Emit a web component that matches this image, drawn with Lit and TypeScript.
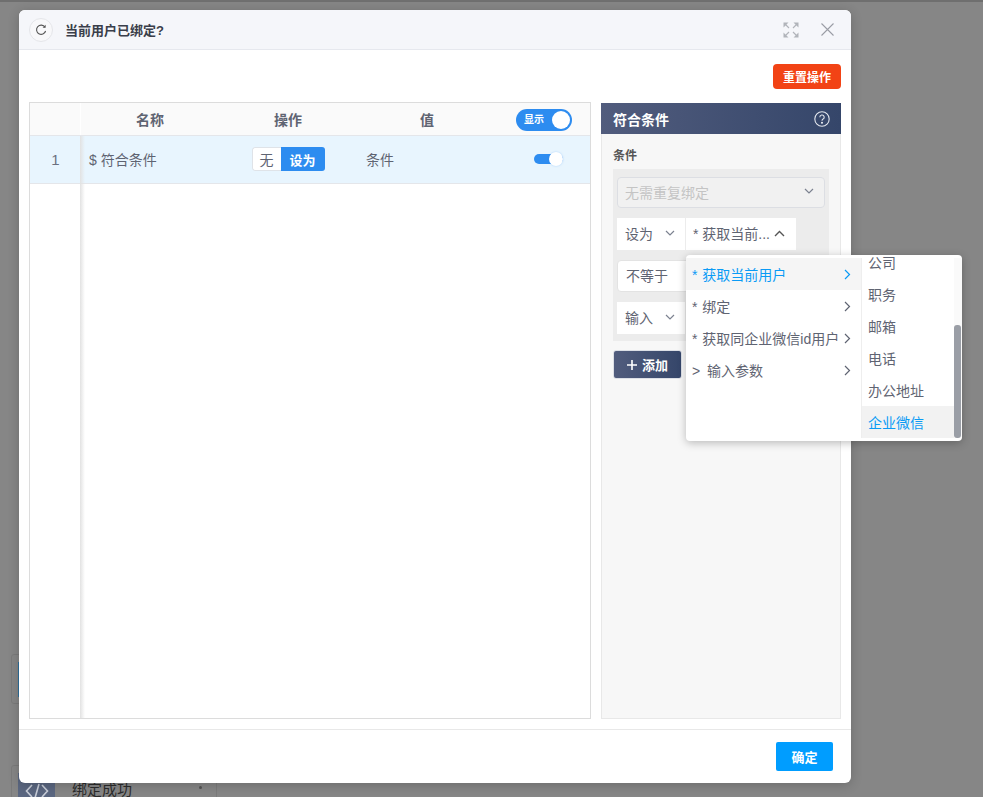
import { css, html, LitElement, svg } from 'lit';
import { customElement } from 'lit/decorators.js';

const chevronDown = svg`<path d="M1 1l4 4 4-4" fill="none" stroke="currentColor" stroke-width="1.2"/>`;
const chevronUp = svg`<path d="M1 6l4.5-4.5L10 6" fill="none" stroke="currentColor" stroke-width="1.4"/>`;
const chevronRight = svg`<path d="M1 1l4.5 4.5L1 10" fill="none" stroke="currentColor" stroke-width="1.2"/>`;

const parents = [
  { label: '* 获取当前用户', active: true },
  { label: '* 绑定' },
  { label: '* 获取同企业微信id用户' },
  { label: '> 输入参数', wide: true },
];
const fields = ['公司', '职务', '邮箱', '电话', '办公地址', '企业微信'];

@customElement('app-root')
export class AppRoot extends LitElement {
  static styles = css`
    :host {
      display: block;
      height: 797px;
      position: relative;
      overflow: hidden;
      background: #868686;
      font-family: "Liberation Sans", "Noto Sans CJK SC", sans-serif;
      font-size: 14px;
      color: #5f6472;
    }
    * { box-sizing: border-box; }

    /* page behind the mask */
    .page-line { height: 2px; background: #6f6f6f; }
    .bg-stub {
      position: absolute;
      left: 11px;
      top: 654px;
      width: 40px;
      height: 50px;
      border: 1px solid #7b7b7b;
      border-radius: 3px;
    }
    .bg-stub i { display: block; width: 3px; height: 35px; margin: 7px 0 0 6px; background: #2f6f9c; }
    .bg-card {
      position: absolute;
      left: 11px;
      top: 765px;
      width: 206px;
      height: 40px;
      border: 1px solid #7b7b7b;
      border-radius: 3px;
      display: flex;
      align-items: flex-start;
    }
    .bg-card .code {
      width: 37px;
      height: 32px;
      margin: 7px 0 0 6px;
      background: #5b6781;
      display: flex;
      justify-content: center;
      padding-top: 10px;
    }
    .bg-card .txt { margin: 13px 0 0 17px; font-size: 15px; line-height: 21px; color: #2c2c2c; flex: 1; }
    .bg-card .dot { width: 3px; height: 3px; border-radius: 50%; background: #555; margin: 20px 14px 0 0; }

    /* dialog */
    .dialog {
      position: absolute;
      left: 19px;
      top: 10px;
      width: 832px;
      height: 773px;
      background: #fff;
      border-radius: 6px;
      box-shadow: 0 2px 12px rgba(0,0,0,.2);
      display: flex;
      flex-direction: column;
      overflow: hidden;
    }
    .head {
      height: 40px;
      flex: none;
      background: #f5f6fa;
      border-bottom: 1px solid #e6e8ee;
      display: flex;
      align-items: center;
      padding: 0 17px 0 10px;
    }
    .refresh {
      width: 24px;
      height: 24px;
      border-radius: 50%;
      border: 1px solid #e5e6ea;
      background: #f8f8fa;
      display: flex;
      align-items: center;
      justify-content: center;
      margin-right: 12px;
    }
    .title { font-weight: 700; font-size: 13px; color: #3a3e4a; flex: 1; }
    .head svg.max { margin-right: 22px; }

    .body {
      flex: 1;
      min-height: 0;
      display: flex;
      flex-direction: column;
      padding: 14px 10px 10px;
    }
    .toolbar { display: flex; justify-content: flex-end; height: 25px; margin-bottom: 13px; }
    .reset {
      width: 68px;
      height: 25px;
      background: #f24315;
      color: #fff;
      font-size: 12px;
      font-weight: 700;
      border-radius: 4px;
      display: flex;
      align-items: center;
      justify-content: center;
    }
    .main { flex: 1; min-height: 0; display: flex; gap: 10px; }

    /* table */
    .table {
      width: 562px;
      border: 1px solid #dcdcdc;
      display: flex;
      flex-direction: column;
      position: relative;
    }
    .thead {
      height: 33px;
      background: #fafafa;
      border-bottom: 1px solid #e4e6ea;
      display: grid;
      grid-template-columns: 51px 138px 138px 140px 1fr;
      align-items: center;
      font-weight: 700;
      font-size: 14px;
      text-align: center;
    }
    .thead .first { height: 100%; border-right: 1px solid #fff; }
    .tr {
      height: 48px;
      background: #e8f5fe;
      border-bottom: 1px solid #e4e6ea;
      display: grid;
      grid-template-columns: 51px 138px 138px 140px 1fr;
      align-items: center;
      padding-bottom: 1px;
      font-size: 14px;
    }
    .tr .num { text-align: center; font-size: 15px; color: #6b7080; }
    .tr .name { padding-left: 8px; }
    .tr .op { display: flex; justify-content: center; }
    .tr .val { padding-left: 9px; }
    .fixed-shadow {
      position: absolute;
      left: 50px;
      top: 33px;
      bottom: 0;
      width: 5px;
      background: linear-gradient(90deg, #e2e2e2, rgba(255,255,255,0));
    }
    .seg { display: flex; height: 24px; border-radius: 3px; overflow: hidden; width: 73px; }
    .seg span { display: flex; align-items: center; justify-content: center; }
    .seg .off {
      width: 29px;
      background: #fff;
      border: 1px solid #dfe3e8;
      border-right: 0;
      border-radius: 3px 0 0 3px;
    }
    .seg .on { flex: 1; background: #2d8cf0; color: #fff; font-weight: 700; font-size: 13px; }
    .switch-big {
      width: 56px;
      height: 22px;
      border-radius: 11px;
      background: #2d8cf0;
      position: relative;
      color: #fff;
      font-size: 10px;
      font-weight: 700;
      line-height: 22px;
      padding-left: 8px;
      margin: 1px 0 0 19px;
      text-align: left;
    }
    .switch-big i {
      position: absolute;
      right: 2px;
      top: 2px;
      width: 18px;
      height: 18px;
      border-radius: 50%;
      background: #fff;
    }
    .switch-small {
      width: 29px;
      height: 10px;
      border-radius: 5px;
      background: #2d8cf0;
      position: relative;
      margin-left: 37px;
    }
    .switch-small i {
      position: absolute;
      right: 0;
      top: -2px;
      width: 14px;
      height: 14px;
      border-radius: 50%;
      background: #fff;
      box-shadow: 0 0 2px rgba(45,140,240,.35);
    }

    /* condition panel */
    .panel {
      width: 240px;
      margin-top: 1px;
      background: #f7f7f7;
      border: 1px solid #e8e8e8;
      border-top: 0;
      display: flex;
      flex-direction: column;
    }
    .panel-head {
      height: 31px;
      margin: 0 -1px;
      background: linear-gradient(90deg, #515c7d, #35466a);
      color: #fff;
      font-weight: 700;
      font-size: 14px;
      display: flex;
      align-items: center;
      justify-content: space-between;
      padding: 0 11px 0 12px;
    }
    .panel-body { padding: 14px 11px 0; }
    .label { font-size: 12px; font-weight: 700; line-height: 17px; margin-bottom: 4px; color: #555; }
    .group {
      width: 216px;
      height: 172px;
      background: #ececec;
      padding: 8px 4px;
      display: flex;
      flex-direction: column;
      gap: 10px;
    }
    .row { display: flex; gap: 1px; height: 32px; }
    .sel {
      height: 32px;
      background: #fff;
      display: flex;
      align-items: center;
      justify-content: space-between;
      padding: 0 10px 2px 8px;
      font-size: 14px;
      flex: none;
    }
    .sel svg { color: #7c8290; }
    .sel.full {
      width: 208px;
      height: 31px;
      background: #f1f1f1;
      border: 1px solid #dcdee3;
      border-radius: 4px;
      color: #c4c4c4;
      padding-left: 7px;
    }
    .sel.short { width: 68px; }
    .sel.wide { width: 110px; padding-right: 11px; padding-left: 7px; }
    .sel.wide svg { color: #555; }
    .sel.neq { width: 90px; border: 1px solid #e3e3e3; border-radius: 4px; }
    .add {
      margin-top: 9px;
      width: 69px;
      height: 29px;
      border-radius: 3px;
      background: linear-gradient(90deg, #515c7d, #35466a);
      color: #fff;
      font-weight: 700;
      font-size: 13px;
      display: flex;
      align-items: center;
      justify-content: center;
      gap: 5px;
      border: 1px solid #dcdfe6;
    }

    .footer {
      height: 54px;
      flex: none;
      border-top: 1px solid #e8e8e8;
      display: flex;
      justify-content: flex-end;
      padding: 12px 18px 0 0;
    }
    .ok {
      width: 57px;
      height: 29px;
      background: #009dff;
      color: #fff;
      border-radius: 2px;
      font-size: 13px;
      font-weight: 700;
      display: flex;
      align-items: center;
      justify-content: center;
    }

    /* cascader popup */
    .cascader {
      position: absolute;
      left: 686px;
      top: 255px;
      width: 276px;
      height: 186px;
      background: #fff;
      border-radius: 4px;
      box-shadow: 0 2px 8px rgba(0,0,0,.25);
      display: flex;
      padding: 3px 0;
      overflow: hidden;
      font-size: 14px;
    }
    .col1 { width: 176px; border-right: 1px solid #eee; flex: none; }
    .col1 .item {
      height: 32px;
      display: flex;
      align-items: center;
      justify-content: space-between;
      padding: 0 10px 0 6px;
      word-spacing: 1px;
    }
    .col1 .item.active { background: #f5f5f5; color: #0a9bf5; }
    .col1 .item.wide { word-spacing: 3px; }
    .col2 { width: 92px; margin-top: -12px; flex: none; }
    .col2 .item { height: 32px; display: flex; align-items: center; padding-left: 6px; }
    .col2 .item.active { background: #f2f2f2; color: #0a9bf5; }
    .scroll { flex: 1; position: relative; background: #fafafa; }
    .thumb {
      position: absolute;
      left: 0;
      right: 1px;
      top: 67px;
      height: 113px;
      border-radius: 3px;
      background: #9a9ea6;
    }
  `;

  render() {
    return html`
      <div class="page-line"></div>
      <div class="bg-stub"><i></i></div>
      <div class="bg-card">
        <div class="code">
          <svg width="24" height="16" viewBox="0 0 24 16" fill="none" stroke="#c9ced9" stroke-width="1.6">
            <path d="M7 2L1.5 8 7 14M17 2l5.500 6L17 14M14 1l-4 14"/>
          </svg>
        </div>
        <div class="txt">绑定成功</div>
        <span class="dot"></span>
      </div>

      <div class="dialog">
        <div class="head">
          <span class="refresh">
            <svg width="12" height="12" viewBox="0 0 12 12"><path d="M10 3.2A4.600 4.600 0 1 0 10.600 7" fill="none" stroke="#555" stroke-width="1.1"/><path d="M10.600 .8v3h-3z" fill="#555"/></svg>
          </span>
          <span class="title">当前用户已绑定?</span>
          <svg class="max" width="16" height="16" viewBox="0 0 16 16" fill="#b1b4ba" stroke="#b1b4ba" stroke-width="1.1">
            <path d="M.5 .5h5L.5 5.500zM15.500 .5h-5l5 5zM.5 15.500h5l-5-5zM15.500 15.500h-5l5-5z" stroke="none"/>
            <path d="M2 2l4 4M14 2l-4 4M2 14l4-4M14 14l-4-4" fill="none"/>
          </svg>
          <svg width="13" height="13" viewBox="0 0 13 13" fill="none" stroke="#9a9da5" stroke-width="1.1"><path d="M.5 .5l12 12M12.500 .5l-12 12"/></svg>
        </div>

        <div class="body">
          <div class="toolbar"><span class="reset">重置操作</span></div>
          <div class="main">
            <div class="table">
              <div class="thead">
                <span class="first"></span>
                <span>名称</span>
                <span>操作</span>
                <span>值</span>
                <span class="switch-big">显示<i></i></span>
              </div>
              <div class="tr">
                <span class="num">1</span>
                <span class="name">$ 符合条件</span>
                <span class="op"><span class="seg"><span class="off">无</span><span class="on">设为</span></span></span>
                <span class="val">条件</span>
                <span class="switch-small"><i></i></span>
              </div>
              <div class="fixed-shadow"></div>
            </div>

            <div class="panel">
              <div class="panel-head">
                <span>符合条件</span>
                <svg width="16" height="16" viewBox="0 0 16 16" fill="none" stroke="#e4e7ee" stroke-width="1.1">
                  <circle cx="8" cy="8" r="7.200"/>
                  <path d="M5.800 6.200a2.200 2.200 0 1 1 3.300 1.900c-.7.4-1.100.8-1.100 1.700"/>
                  <circle cx="8" cy="11.800" r=".5" fill="#e4e7ee"/>
                </svg>
              </div>
              <div class="panel-body">
                <div class="label">条件</div>
                <div class="group">
                  <div class="sel full">无需重复绑定<svg width="10" height="7" viewBox="0 0 10 7">${chevronDown}</svg></div>
                  <div class="row">
                    <div class="sel short">设为<svg width="10" height="7" viewBox="0 0 10 7">${chevronDown}</svg></div>
                    <div class="sel wide">* 获取当前...<svg width="11" height="7" viewBox="0 0 11 7">${chevronUp}</svg></div>
                  </div>
                  <div class="row"><div class="sel neq">不等于</div></div>
                  <div class="row">
                    <div class="sel short">输入<svg width="10" height="7" viewBox="0 0 10 7">${chevronDown}</svg></div>
                  </div>
                </div>
                <div class="add">
                  <svg width="10" height="10" viewBox="0 0 10 10"><path d="M5 0v10M0 5h10" stroke="#fff" stroke-width="1.6"/></svg>
                  添加
                </div>
              </div>
            </div>
          </div>
        </div>

        <div class="footer"><span class="ok">确定</span></div>
      </div>

      <div class="cascader">
        <div class="col1">
          ${parents.map(p => html`
            <div class="item ${p.active ? 'active' : ''} ${p.wide ? 'wide' : ''}">
              <span>${p.label}</span>
              <svg width="7" height="11" viewBox="0 0 7 11">${chevronRight}</svg>
            </div>`)}
        </div>
        <div class="col2">
          ${fields.map((f, i) => html`<div class="item ${i === fields.length - 1 ? 'active' : ''}">${f}</div>`)}
        </div>
        <div class="scroll"><div class="thumb"></div></div>
      </div>
    `;
  }
}
